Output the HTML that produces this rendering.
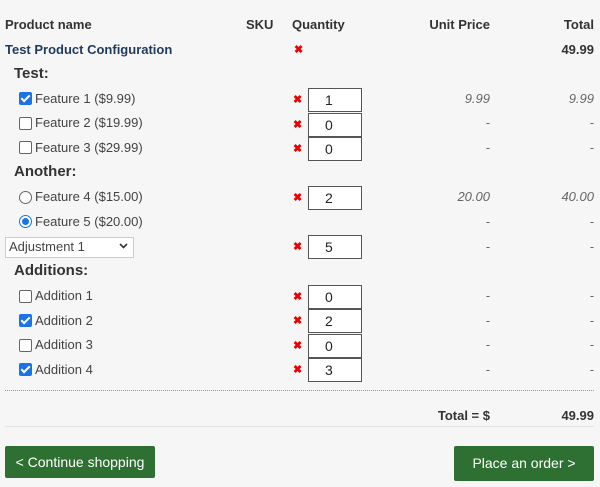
<!DOCTYPE html>
<html><head><style>
body{margin:0;width:600px;height:487px;background:#f6f6f6;font-family:"Liberation Sans",sans-serif;font-size:13px;color:#444;position:relative;overflow:hidden}
.a{position:absolute;white-space:nowrap;line-height:16px}
.b{font-weight:bold;color:#333}
.h{font-weight:bold;font-size:15px;color:#333}
.x{color:#e00;font-size:11px;font-weight:bold}
.i{position:absolute;left:308px;width:52px;height:22px;border:1px solid #555;background:#fff;box-sizing:content-box;font-size:14px;line-height:22px;padding-left:0;text-indent:16px;color:#222}
.r{text-align:right;font-style:italic;color:#666}
.rb{text-align:right}
.cb{position:absolute;left:19px;width:11px;height:11px;border:1px solid #666;border-radius:2px;background:#fff}
.cb.on{background:#1a73e8;border-color:#1a73e8}
.cb.on:after{content:"";position:absolute;left:3px;top:0px;width:3px;height:7px;border:solid #fff;border-width:0 2px 2px 0;transform:rotate(45deg)}
.rd{position:absolute;left:19px;width:11px;height:11px;border:1px solid #666;border-radius:50%;background:#fff}
.rd.on{border-color:#1a73e8}
.rd.on:after{content:"";position:absolute;left:2px;top:2px;width:7px;height:7px;border-radius:50%;background:#1a73e8}
.btn{position:absolute;background:#2e7031;color:#fff;font-size:14px;border-radius:2px;text-align:center}
</style></head><body>
<div class="a b" style="left:5px;top:17px">Product name</div>
<div class="a b" style="left:246px;top:17px">SKU</div>
<div class="a b" style="left:292px;top:17px">Quantity</div>
<div class="a b rb" style="left:390px;width:100px;top:17px">Unit Price</div>
<div class="a b rb" style="left:494px;width:100px;top:17px">Total</div>

<div class="a b" style="left:5px;top:42px;color:#1f3a5a">Test Product Configuration</div>
<div class="a x" style="left:294px;top:42px">✖</div>
<div class="a b rb" style="left:494px;width:100px;top:42px">49.99</div>

<div class="a h" style="left:14px;top:66px">Test:</div>

<div class="cb on" style="top:92px"></div><div class="a" style="left:35px;top:91px">Feature 1 ($9.99)</div>
<div class="a x" style="left:293px;top:92px">✖</div><div class="i" style="top:88px">1</div>
<div class="a r" style="left:390px;width:100px;top:91px">9.99</div><div class="a r" style="left:494px;width:100px;top:91px">9.99</div>

<div class="cb" style="top:117px"></div><div class="a" style="left:35px;top:115px">Feature 2 ($19.99)</div>
<div class="a x" style="left:293px;top:117px">✖</div><div class="i" style="top:113px">0</div>
<div class="a r" style="left:390px;width:100px;top:115px">-</div><div class="a r" style="left:494px;width:100px;top:115px">-</div>

<div class="cb" style="top:141px"></div><div class="a" style="left:35px;top:140px">Feature 3 ($29.99)</div>
<div class="a x" style="left:293px;top:141px">✖</div><div class="i" style="top:137px">0</div>
<div class="a r" style="left:390px;width:100px;top:140px">-</div><div class="a r" style="left:494px;width:100px;top:140px">-</div>

<div class="a h" style="left:14px;top:164px">Another:</div>

<div class="rd" style="top:191px"></div><div class="a" style="left:35px;top:189px">Feature 4 ($15.00)</div>
<div class="a x" style="left:293px;top:190px">✖</div><div class="i" style="top:186px">2</div>
<div class="a r" style="left:390px;width:100px;top:189px">20.00</div><div class="a r" style="left:494px;width:100px;top:189px">40.00</div>

<div class="rd on" style="top:215px"></div><div class="a" style="left:35px;top:214px">Feature 5 ($20.00)</div>
<div class="a r" style="left:390px;width:100px;top:214px">-</div><div class="a r" style="left:494px;width:100px;top:214px">-</div>

<div style="position:absolute;left:5px;top:237px;width:127px;height:19px;border:1px solid #ccc;background:#fff"></div>
<div class="a" style="left:9px;top:239px">Adjustment 1</div>
<svg style="position:absolute;left:119px;top:243px" width="9" height="6"><path d="M1 1L4.5 4.5L8 1" stroke="#333" stroke-width="1.6" fill="none"/></svg>
<div class="a x" style="left:293px;top:239px">✖</div><div class="i" style="top:235px">5</div>
<div class="a r" style="left:390px;width:100px;top:239px">-</div><div class="a r" style="left:494px;width:100px;top:239px">-</div>

<div class="a h" style="left:14px;top:263px">Additions:</div>

<div class="cb" style="top:290px"></div><div class="a" style="left:35px;top:288px">Addition 1</div>
<div class="a x" style="left:293px;top:289px">✖</div><div class="i" style="top:285px">0</div>
<div class="a r" style="left:390px;width:100px;top:288px">-</div><div class="a r" style="left:494px;width:100px;top:288px">-</div>

<div class="cb on" style="top:314px"></div><div class="a" style="left:35px;top:313px">Addition 2</div>
<div class="a x" style="left:293px;top:313px">✖</div><div class="i" style="top:309px">2</div>
<div class="a r" style="left:390px;width:100px;top:313px">-</div><div class="a r" style="left:494px;width:100px;top:313px">-</div>

<div class="cb" style="top:339px"></div><div class="a" style="left:35px;top:337px">Addition 3</div>
<div class="a x" style="left:293px;top:338px">✖</div><div class="i" style="top:334px">0</div>
<div class="a r" style="left:390px;width:100px;top:337px">-</div><div class="a r" style="left:494px;width:100px;top:337px">-</div>

<div class="cb on" style="top:363px"></div><div class="a" style="left:35px;top:362px">Addition 4</div>
<div class="a x" style="left:293px;top:362px">✖</div><div class="i" style="top:358px">3</div>
<div class="a r" style="left:390px;width:100px;top:362px">-</div><div class="a r" style="left:494px;width:100px;top:362px">-</div>

<div style="position:absolute;left:5px;top:390px;width:589px;border-top:1px dotted #7a9ad6"></div>
<div class="a b rb" style="left:390px;width:100px;top:408px">Total = $</div>
<div class="a b rb" style="left:494px;width:100px;top:408px">49.99</div>
<div style="position:absolute;left:5px;top:426px;width:589px;border-top:1px solid #e4e4e4"></div>

<div class="btn" style="left:5px;top:446px;width:150px;height:32px;line-height:32px">&lt; Continue shopping</div>
<div class="btn" style="left:454px;top:446px;width:140px;height:35px;line-height:35px">Place an order &gt;</div>
</body></html>
